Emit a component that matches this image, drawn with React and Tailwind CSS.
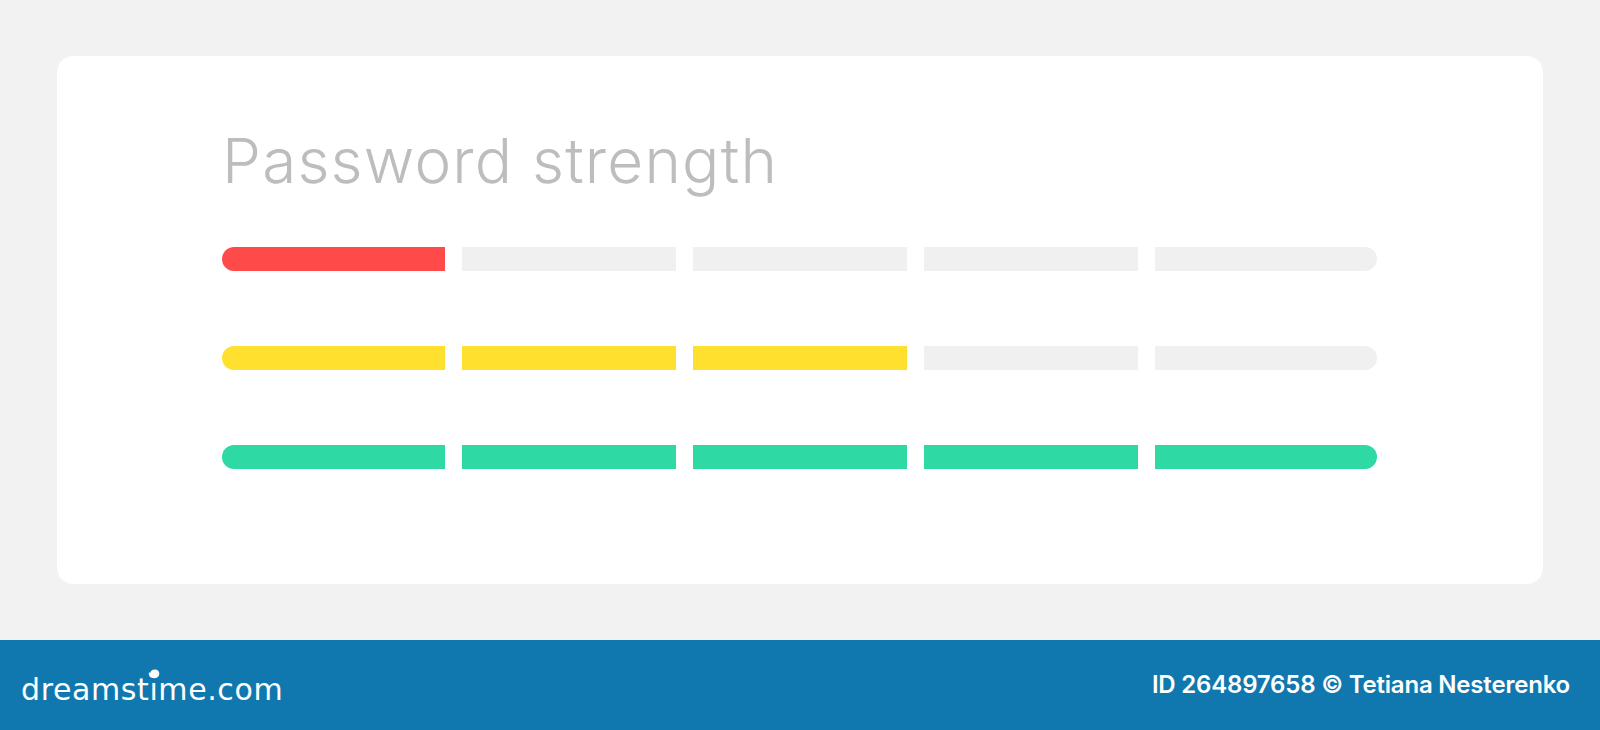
import React from "react";

const levels = [
  { color: "bg-[#ff4a4a]", filled: 1 },
  { color: "bg-[#ffe02e]", filled: 3 },
  { color: "bg-[#2ed9a3]", filled: 5 },
];

const segmentWidths = ["w-[223px]", "w-[214px]", "w-[214px]", "w-[214px]", "w-[222px]"];

const StrengthBar = ({ color, filled }) => {
  return (
    <div className="flex gap-[17px] h-[24px]">
      {segmentWidths.map((w, i) => {
        let shape = "";
        if (i === 0) shape = "rounded-l-full";
        if (i === segmentWidths.length - 1) shape = "rounded-r-full";
        const bg = i < filled ? color : "bg-[#f0f0f0]";
        return <div key={i} className={`${w} h-full ${bg} ${shape}`} />;
      })}
    </div>
  );
};

// little swirl that replaces the dot of the "i" in the logo
const Spiral = () => (
  <svg
    width="15"
    height="15"
    viewBox="0 0 15 15"
    className="absolute top-[-6px] left-1/2 -translate-x-1/2"
  >
    <path
      d="M7.5 7.8 C7.5 6.9 8.8 6.9 8.8 8 C8.8 9.3 6 9.3 6 7.5 C6 5.3 10.3 5.3 10.3 8 C10.3 11 4.5 11 4.5 7.3 C4.5 3.3 12 3.3 12 7.8 C12 12.8 3 12.8 3 7.3"
      fill="none"
      stroke="white"
      strokeWidth="1.6"
      strokeLinecap="round"
    />
  </svg>
);

const App = () => {
  return (
    <div className="w-[1600px] h-[730px] flex flex-col" style={{ fontFamily: "Inter, sans-serif" }}>
      {/* Page area */}
      <div className="h-[640px] bg-[#f2f2f2] pt-[56px] px-[57px]">
        <div className="h-[528px] bg-white rounded-[16px] pt-[74px] pl-[165px]">
          <h1 className="text-[62px] leading-none font-light text-[#bdbdbd] tracking-[1.2px]">
            Password strength
          </h1>
          <div className="mt-[55px] flex flex-col gap-[75px]">
            {levels.map((l, i) => (
              <StrengthBar key={i} color={l.color} filled={l.filled} />
            ))}
          </div>
        </div>
      </div>

      {/* Footer strip */}
      <div className="h-[90px] bg-[#1078ae] flex items-center justify-between pl-[21px] pr-[30px] text-white">
        <div
          className="text-[30px] leading-none tracking-[0.6px] pt-[10px]"
          style={{ fontFamily: "'DejaVu Sans', sans-serif" }}
        >
          dreamst
          <span className="relative">
            ı
            <Spiral />
          </span>
          me.com
        </div>
        <div className="text-[24px] font-semibold leading-none tracking-[-0.2px]">
          ID 264897658 © Tetiana Nesterenko
        </div>
      </div>
    </div>
  );
};

export default App;
